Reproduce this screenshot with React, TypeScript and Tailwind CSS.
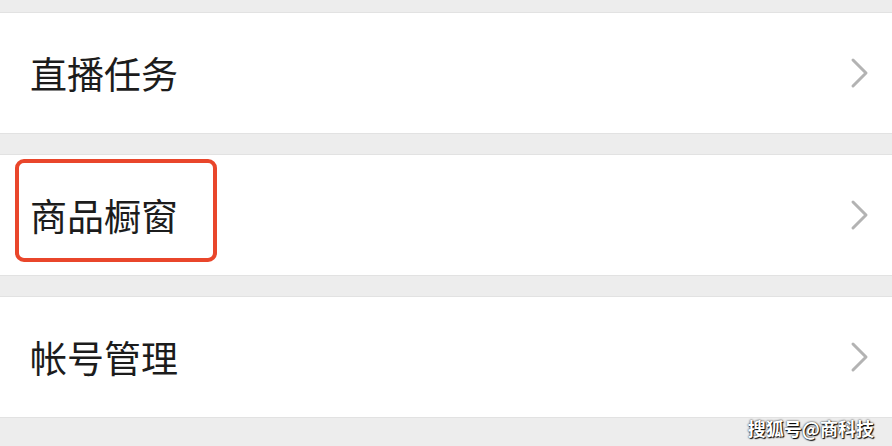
import React from 'react';

const font = { fontFamily: '"Noto Sans CJK SC", "Noto Sans", sans-serif' };

const Chevron: React.FC = () => (
  <svg width="20" height="32" viewBox="0 0 20 32" fill="none" className="shrink-0">
    <path d="M3 3 L16 16 L3 29" stroke="#b3b3b3" strokeWidth="3" strokeLinecap="round" strokeLinejoin="round" />
  </svg>
);

interface Item {
  label: string;
  highlight?: boolean;
}

const items: Item[] = [
  { label: '直播任务' },
  { label: '商品橱窗', highlight: true },
  { label: '帐号管理' },
];

const App: React.FC = () => {
  return (
    <div className="w-[892px] h-[446px] bg-[#ededed] overflow-hidden relative" style={font}>
      <div className="pt-[12px] flex flex-col gap-[20px]">
        {items.map(item => (
          <div
            key={item.label}
            className="h-[122px] bg-white border-y border-[#e2e2e2] flex items-center justify-between pl-[30px] pr-[22px]"
          >
            {item.highlight ? (
              <div className="-ml-[15px] mb-[9px] h-[103px] w-[202px] border-[4px] border-[#e9462b] rounded-[9px] flex items-center pl-[11px] pt-[9px]">
                <span className="text-[37px] leading-none text-[#1c1c1c]">{item.label}</span>
              </div>
            ) : (
              <span className="text-[37px] leading-none text-[#1c1c1c]">{item.label}</span>
            )}
            <Chevron />
          </div>
        ))}
      </div>
      <div
        className="absolute right-[18px] bottom-[9px] text-[18px] leading-none font-bold text-white"
        style={{ textShadow: '0 0 2px #000, 1px 1px 1px #000' }}
      >
        搜狐号@商科技
      </div>
    </div>
  );
};

export default App;
